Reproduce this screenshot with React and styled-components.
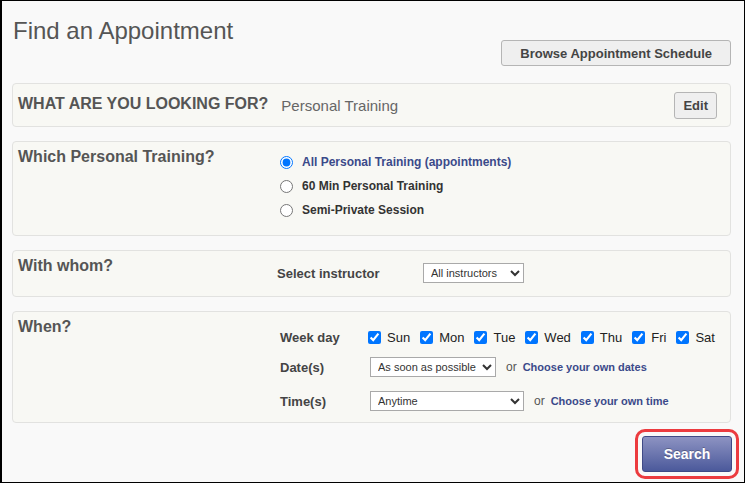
import React from "react";
import styled, { createGlobalStyle } from "styled-components";

const GlobalStyle = createGlobalStyle`
  html, body { margin: 0; padding: 0; background: #fff; }
  body { font-family: "Liberation Sans", Arial, sans-serif; }
  *, *::before, *::after { box-sizing: border-box; }
`;

const Page = styled.div`
  width: 745px;
  height: 483px;
  border: 1px solid #000;
  border-left-width: 2px;
  background: #f9f9f9;
  padding: 16px 13px 0 10px;
  display: flex;
  flex-direction: column;
`;

const Header = styled.div`
  display: flex;
  justify-content: space-between;
  align-items: flex-start;
  height: 48px;
  margin-bottom: 18px;
`;

const Title = styled.h1`
  margin: 0 0 0 1px;
  font-size: 24px;
  line-height: 28px;
  font-weight: normal;
  color: #555;
`;

const GreyButton = styled.button`
  font-family: "Liberation Sans", Arial, sans-serif;
  font-weight: bold;
  font-size: 13px;
  color: #444;
  background: #efefef;
  border: 1px solid #b5b5b5;
  border-radius: 3px;
  height: ${(p) => p.$h}px;
  padding: 0 ${(p) => p.$px}px;
  margin-top: ${(p) => p.$mt || 0}px;
  cursor: pointer;
`;

const Panels = styled.div`
  display: flex;
  flex-direction: column;
  gap: 14px;
`;

const Panel = styled.div`
  display: flex;
  align-items: ${(p) => (p.$center ? "center" : "flex-start")};
  height: ${(p) => p.$h}px;
  background: #f8f8f4;
  border: 1px solid #e2e2e0;
  border-radius: 4px;
  padding: ${(p) => (p.$center ? "0 13px 0 5px" : "0")};
`;

const PanelTitle = styled.div`
  width: 264px;
  flex: none;
  padding: 6px 0 0 5px;
  font-size: 16px;
  line-height: 18px;
  font-weight: bold;
  color: #555;
`;

const InlineTitle = styled.div`
  font-size: 16px;
  font-weight: bold;
  color: #555;
  margin-top: -2px;
`;

const Summary = styled.div`
  font-size: 15px;
  color: #666;
  margin-left: 13px;
  flex: 1;
`;

const RadioList = styled.div`
  display: flex;
  flex-direction: column;
  padding: 8px 0 0 3px;
`;

const RadioRow = styled.label`
  display: flex;
  align-items: center;
  height: 24px;
  gap: 9px;
  font-size: 12px;
  font-weight: bold;
  color: ${(p) => (p.$active ? "#3b4a8a" : "#333")};
`;

const Radio = styled.input`
  margin: 0;
  width: 13px;
  height: 13px;
`;

const Content = styled.div`
  display: flex;
  flex-direction: column;
  padding: ${(p) => p.$pt}px 0 0 ${(p) => p.$pl || 0}px;
`;

const Row = styled.div`
  display: flex;
  align-items: center;
  height: 20px;
  margin-top: ${(p) => p.$mt || 0}px;
`;

const FieldLabel = styled.div`
  width: ${(p) => p.$w}px;
  flex: none;
  font-size: 13px;
  font-weight: bold;
  color: #444;
`;

const Select = styled.select`
  width: ${(p) => p.$w}px;
  height: 20px;
  margin-left: ${(p) => p.$ml || 0}px;
  font-family: "Liberation Sans", Arial, sans-serif;
  font-size: 11px;
  color: #333;
  background: #fff;
  border: 1px solid #a9a9a9;
  border-radius: 0;
  padding: 0 0 0 3px;
`;

const Days = styled.div`
  display: flex;
  align-items: center;
  gap: 10px;
`;

const Day = styled.label`
  display: flex;
  align-items: center;
  gap: 6px;
  font-size: 13px;
  color: #222;
`;

const Check = styled.input`
  margin: 0;
  width: 13px;
  height: 13px;
`;

const Or = styled.span`
  font-size: 12px;
  color: #555;
  margin-left: 10px;
`;

const Link = styled.a`
  font-size: 11px;
  font-weight: bold;
  color: #3b4a8a;
  text-decoration: none;
  margin-left: 6px;
  cursor: pointer;
`;

const Footer = styled.div`
  display: flex;
  justify-content: flex-end;
  margin-top: 13px;
  margin-right: -1px;
`;

const SearchButton = styled.button`
  width: 90px;
  height: 36px;
  font-family: "Liberation Sans", Arial, sans-serif;
  font-size: 14px;
  font-weight: bold;
  color: #fff;
  text-shadow: 0 -1px 0 rgba(0, 0, 0, 0.25);
  background: linear-gradient(#8d93c2, #4b599b);
  border: 1px solid #3f4a86;
  border-radius: 3px;
  outline: 3px solid #ec3b3f;
  outline-offset: 4px;
  cursor: pointer;
`;

const days = ["Sun", "Mon", "Tue", "Wed", "Thu", "Fri", "Sat"];
const options = [
  "All Personal Training (appointments)",
  "60 Min Personal Training",
  "Semi-Private Session",
];

export default function App() {
  return (
    <>
      <GlobalStyle />
      <Page>
        <Header>
          <Title>Find an Appointment</Title>
          <GreyButton $h={26} $px={18} $mt={23}>
            Browse Appointment Schedule
          </GreyButton>
        </Header>
        <Panels>
          <Panel $center $h={44}>
            <InlineTitle>WHAT ARE YOU LOOKING FOR?</InlineTitle>
            <Summary>Personal Training</Summary>
            <GreyButton $h={27} $px={8}>
              Edit
            </GreyButton>
          </Panel>

          <Panel $h={95}>
            <PanelTitle>Which Personal Training?</PanelTitle>
            <RadioList>
              {options.map((o, i) => (
                <RadioRow key={o} $active={i === 0}>
                  <Radio type="radio" name="pt" defaultChecked={i === 0} />
                  {o}
                </RadioRow>
              ))}
            </RadioList>
          </Panel>

          <Panel $h={47}>
            <PanelTitle>With whom?</PanelTitle>
            <Content $pt={12}>
              <Row>
                <FieldLabel $w={146}>Select instructor</FieldLabel>
                <Select $w={101}>
                  <option>All instructors</option>
                </Select>
              </Row>
            </Content>
          </Panel>

          <Panel $h={112}>
            <PanelTitle>When?</PanelTitle>
            <Content $pt={15} $pl={3}>
              <Row>
                <FieldLabel $w={88}>Week day</FieldLabel>
                <Days>
                  {days.map((d) => (
                    <Day key={d}>
                      <Check type="checkbox" defaultChecked />
                      {d}
                    </Day>
                  ))}
                </Days>
              </Row>
              <Row $mt={10}>
                <FieldLabel $w={88}>Date(s)</FieldLabel>
                <Select $w={126} $ml={2}>
                  <option>As soon as possible</option>
                </Select>
                <Or>or</Or>
                <Link>Choose your own dates</Link>
              </Row>
              <Row $mt={14}>
                <FieldLabel $w={88}>Time(s)</FieldLabel>
                <Select $w={154} $ml={2}>
                  <option>Anytime</option>
                </Select>
                <Or>or</Or>
                <Link>Choose your own time</Link>
              </Row>
            </Content>
          </Panel>
        </Panels>
        <Footer>
          <SearchButton>Search</SearchButton>
        </Footer>
      </Page>
    </>
  );
}
